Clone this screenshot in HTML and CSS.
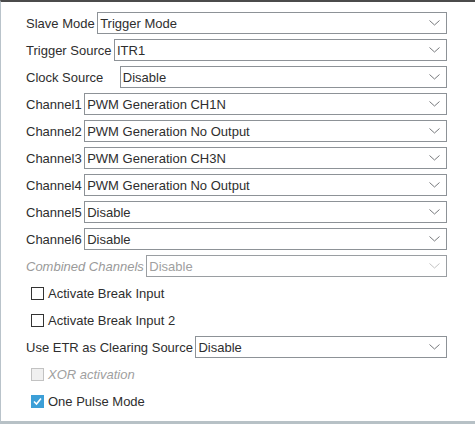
FILE: index.html
```html
<!DOCTYPE html>
<html>
<head>
<meta charset="utf-8">
<link rel="stylesheet" href="styles.css">
</head>
<body>
<div class="frame">
  <div class="panel">
    <div class="row"><span class="lbl">Slave Mode</span><div class="sel"><span>Trigger Mode</span><svg class="chev" width="11" height="6" viewBox="0 0 11 6"><path d="M0.5 0.5 L5.5 5 L10.5 0.5" /></svg></div></div>
    <div class="row"><span class="lbl">Trigger Source</span><div class="sel"><span>ITR1</span><svg class="chev" width="11" height="6" viewBox="0 0 11 6"><path d="M0.5 0.5 L5.5 5 L10.5 0.5" /></svg></div></div>
    <div class="row"><span class="lbl lbl-clock">Clock Source</span><div class="sel"><span>Disable</span><svg class="chev" width="11" height="6" viewBox="0 0 11 6"><path d="M0.5 0.5 L5.5 5 L10.5 0.5" /></svg></div></div>
    <div class="row"><span class="lbl">Channel1</span><div class="sel"><span>PWM Generation CH1N</span><svg class="chev" width="11" height="6" viewBox="0 0 11 6"><path d="M0.5 0.5 L5.5 5 L10.5 0.5" /></svg></div></div>
    <div class="row"><span class="lbl">Channel2</span><div class="sel"><span>PWM Generation No Output</span><svg class="chev" width="11" height="6" viewBox="0 0 11 6"><path d="M0.5 0.5 L5.5 5 L10.5 0.5" /></svg></div></div>
    <div class="row"><span class="lbl">Channel3</span><div class="sel"><span>PWM Generation CH3N</span><svg class="chev" width="11" height="6" viewBox="0 0 11 6"><path d="M0.5 0.5 L5.5 5 L10.5 0.5" /></svg></div></div>
    <div class="row"><span class="lbl">Channel4</span><div class="sel"><span>PWM Generation No Output</span><svg class="chev" width="11" height="6" viewBox="0 0 11 6"><path d="M0.5 0.5 L5.5 5 L10.5 0.5" /></svg></div></div>
    <div class="row"><span class="lbl">Channel5</span><div class="sel"><span>Disable</span><svg class="chev" width="11" height="6" viewBox="0 0 11 6"><path d="M0.5 0.5 L5.5 5 L10.5 0.5" /></svg></div></div>
    <div class="row"><span class="lbl">Channel6</span><div class="sel"><span>Disable</span><svg class="chev" width="11" height="6" viewBox="0 0 11 6"><path d="M0.5 0.5 L5.5 5 L10.5 0.5" /></svg></div></div>
    <div class="row disabled"><span class="lbl">Combined Channels</span><div class="sel"><span>Disable</span><svg class="chev" width="11" height="6" viewBox="0 0 11 6"><path d="M0.5 0.5 L5.5 5 L10.5 0.5" /></svg></div></div>
    <div class="row check"><span class="box"></span><span class="clbl">Activate Break Input</span></div>
    <div class="row check"><span class="box"></span><span class="clbl">Activate Break Input 2</span></div>
    <div class="row"><span class="lbl">Use ETR as Clearing Source</span><div class="sel"><span>Disable</span><svg class="chev" width="11" height="6" viewBox="0 0 11 6"><path d="M0.5 0.5 L5.5 5 L10.5 0.5" /></svg></div></div>
    <div class="row check disabled"><span class="box"></span><span class="clbl">XOR activation</span></div>
    <div class="row check checked"><span class="box"><svg width="13" height="13" viewBox="0 0 13 13"><path d="M3 6.5 L5.5 9 L10 3.5" /></svg></span><span class="clbl">One Pulse Mode</span></div>
  </div>
</div>
</body>
</html>
```
FILE: styles.css
```css
html, body {
  margin: 0;
  padding: 0;
  background: #ffffff;
}
.frame {
  width: 475px;
  height: 424px;
  box-sizing: border-box;
  border-top: 2px solid #4b4b4b;
  border-left: 1px solid #b9c3ca;
  border-bottom: 3px solid #b7c1c6;
  font-family: "Liberation Sans", Arial, sans-serif;
  font-size: 13px;
  color: #2e2e2e;
}
.panel {
  padding: 10px 28px 0 25px;
  display: flex;
  flex-direction: column;
  gap: 5px;
}
.row {
  display: flex;
  align-items: center;
  height: 22px;
  gap: 2.5px;
}
.lbl {
  white-space: nowrap;
}
.lbl-clock {
  margin-right: 14px;
}
.sel {
  flex: 1;
  height: 22px;
  box-sizing: border-box;
  border: 1px solid #8d9297;
  display: flex;
  align-items: center;
  justify-content: space-between;
  padding: 0 6px 0 2px;
  background: #ffffff;
  color: #2e2e2e;
}
.chev path {
  fill: none;
  stroke: #77797c;
  stroke-width: 1;
}
.disabled .lbl {
  color: #9a9a9a;
  font-style: italic;
}
.disabled .sel {
  color: #a0a0a0;
  border-color: #9a9ea2;
}
.disabled .chev path {
  stroke: #c4c4c4;
}
.check {
  padding-left: 5px;
  gap: 4px;
}
.box {
  width: 13px;
  height: 13px;
  box-sizing: border-box;
  border: 1px solid #333333;
  background: #ffffff;
  display: flex;
}
.disabled .box {
  border-color: #c2c2c2;
  background: #f0f0f0;
}
.disabled .clbl {
  color: #a0a0a0;
  font-style: italic;
}
.checked .box {
  border: none;
  background: #3c9fd7;
}
.checked .box path {
  fill: none;
  stroke: #ffffff;
  stroke-width: 1.6;
}
```
